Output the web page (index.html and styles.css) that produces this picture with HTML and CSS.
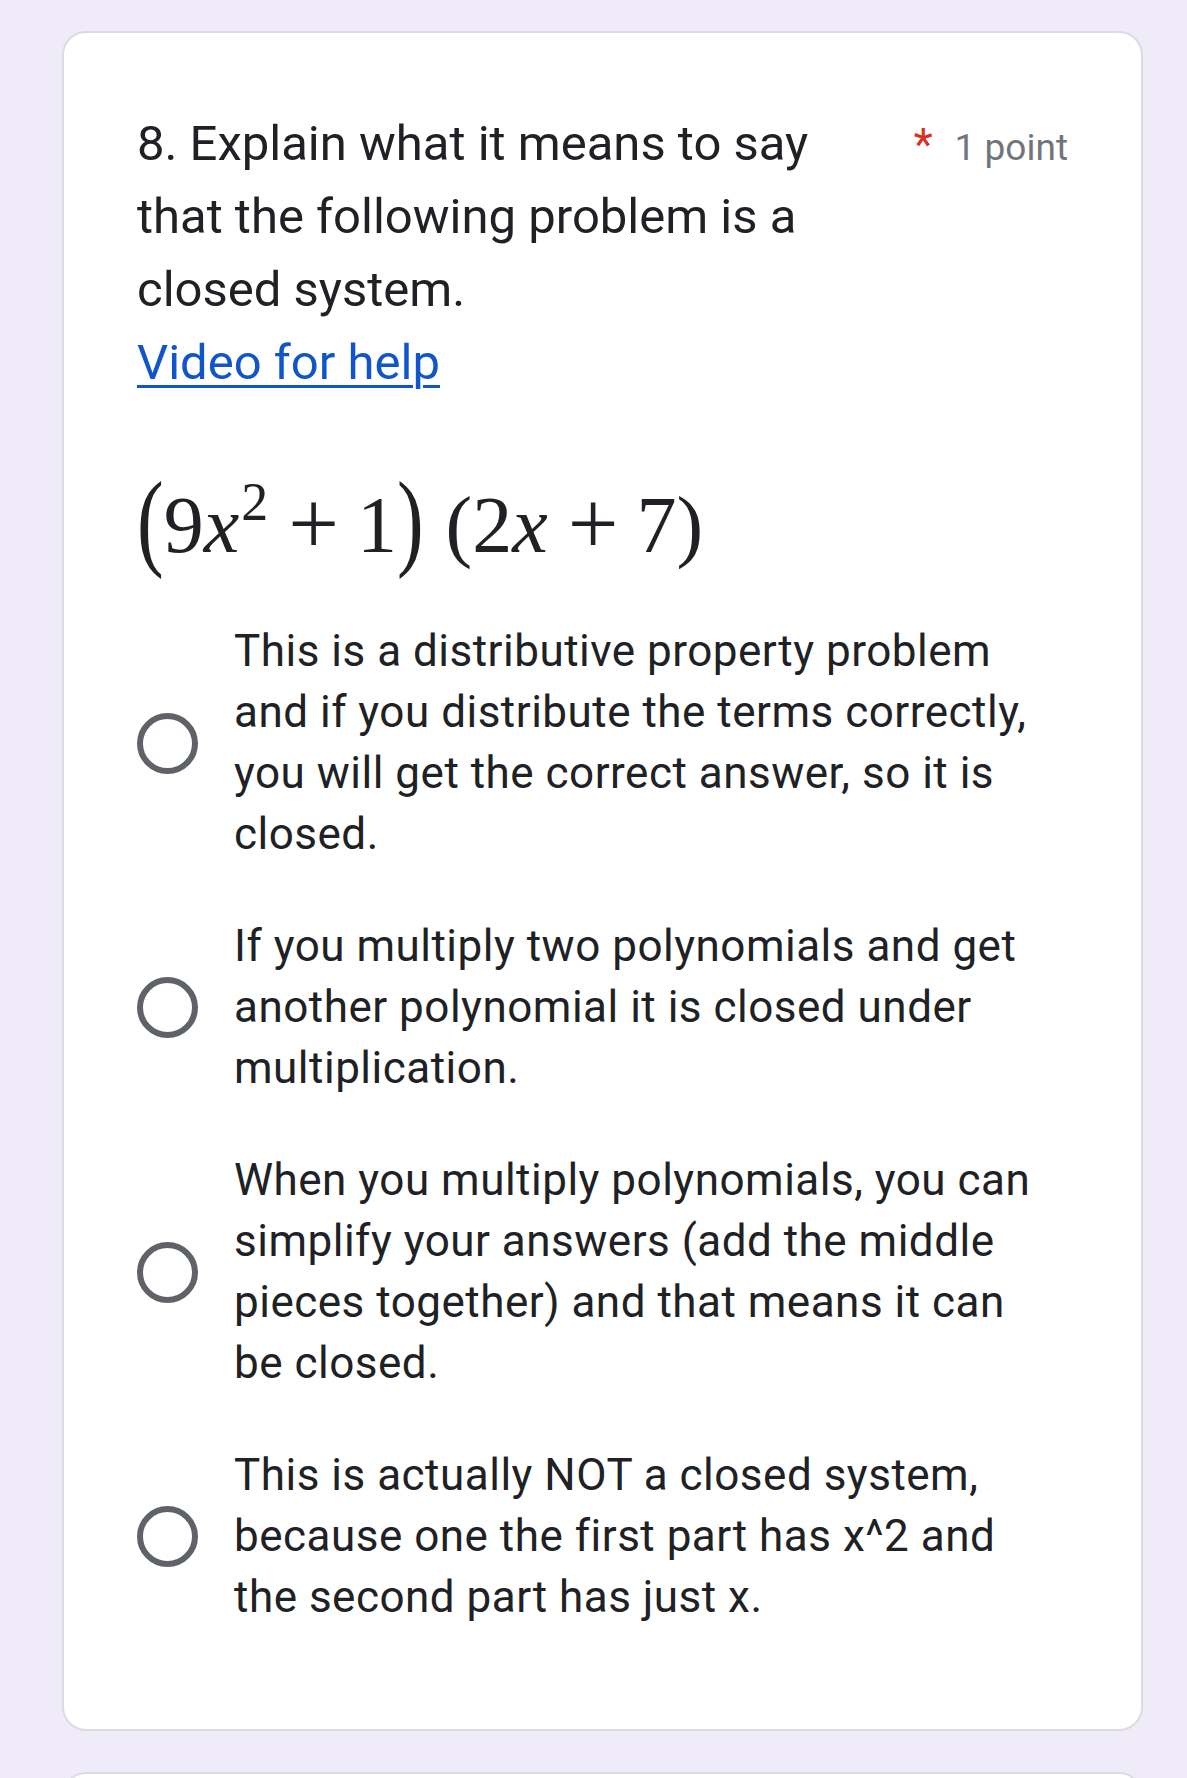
FILE: index.html
```html
<!DOCTYPE html>
<html lang="en">
<head>
    <meta charset="UTF-8">
    <meta name="viewport" content="width=device-width, initial-scale=1.0">
    <title>Question 8</title>
    <link rel="stylesheet" href="styles.css">
</head>
<body>

    <div class="card">
        <!-- Question header -->
        <div class="question-header">
            <div class="question-title">8. Explain what it means to say that the following problem is a closed system.</div>
            <div class="question-meta">
                <span class="required">*</span>
                <span class="points">1 point</span>
            </div>
        </div>
        <a class="help-link" href="#">Video for help</a>

        <!-- Expression -->
        <div class="math">
            <span class="paren big">(</span><span class="num">9</span><i class="var">x</i><sup class="exp">2</sup><span class="op">+</span><span class="num">1</span><span class="paren big">)</span><span class="paren second">(</span><span class="num">2</span><i class="var">x</i><span class="op">+</span><span class="num">7</span><span class="paren">)</span>
        </div>

        <!-- Choices -->
        <div class="options">
            <label class="option">
                <span class="radio"></span>
                <span class="option-text">This is a distributive property problem and if you distribute the terms correctly, you will get the correct answer, so it is closed.</span>
            </label>
            <label class="option">
                <span class="radio"></span>
                <span class="option-text">If you multiply two polynomials and get another polynomial it is closed under multiplication.</span>
            </label>
            <label class="option">
                <span class="radio"></span>
                <span class="option-text">When you multiply polynomials, you can simplify your answers (add the middle pieces together) and that means it can be closed.</span>
            </label>
            <label class="option">
                <span class="radio"></span>
                <span class="option-text">This is actually NOT a closed system, because one the first part has x^2 and the second part has just x.</span>
            </label>
        </div>
    </div>

    <div class="card next"></div>

</body>
</html>
```

FILE: styles.css
```css
* {
    margin: 0;
    padding: 0;
    box-sizing: border-box;
}

html, body {
    height: 100%;
    overflow: hidden;
}

body {
    background-color: #f0ebf8;
    font-family: Roboto, 'Noto Sans', sans-serif;
    color: #202124;
    padding: 31px 0 0 62px;
}

.card {
    width: 1081px;
    background: #fff;
    border: 2px solid #dadce0;
    border-radius: 24px;
    padding: 74px 73px 75px 73px;
}

.card.next {
    margin-top: 41px;
    height: 200px;
}

.question-header {
    display: flex;
    align-items: baseline;
    gap: 24px;
}

.question-title {
    flex: 1;
    font-size: 49px;
    line-height: 73px;
}

.question-meta {
    display: flex;
    align-items: baseline;
    flex-shrink: 0;
}

.required {
    color: #d93025;
    font-size: 44px;
    line-height: 73px;
    margin-right: 22px;
}

.points {
    color: #70757a;
    font-size: 37px;
    line-height: 73px;
}

.help-link {
    display: block;
    width: max-content;
    font-size: 49px;
    line-height: 73px;
    color: #1155cc;
    text-decoration: underline;
    text-decoration-thickness: 3px;
    text-underline-offset: 6px;
}

.math {
    font-family: 'Liberation Serif', 'DejaVu Serif', serif;
    font-size: 80px;
    line-height: 114px;
    height: 114px;
    margin: 69px 0 14px 0;
    white-space: nowrap;
}

.math .paren {
    display: inline-block;
}

.math .paren.big {
    transform: translateY(-6px) scaleY(1.36);
}

.math .paren.second {
    margin-left: 22px;
}

.math .var {
    font-style: italic;
}

.math .exp {
    font-size: 54px;
    vertical-align: 32px;
    line-height: 0;
    margin-left: 2px;
}

.math .op {
    font-size: 90px;
    line-height: 0;
    vertical-align: -2px;
    margin: 0 18px 0 20px;
}

.options {
    display: flex;
    flex-direction: column;
}

.option {
    display: flex;
    align-items: center;
    padding: 25px 0 26px 0;
}

.radio {
    flex-shrink: 0;
    width: 61px;
    height: 61px;
    border: 6px solid #5f6368;
    border-radius: 50%;
    margin-right: 36px;
}

.option-text {
    width: 812px;
    font-size: 44px;
    letter-spacing: 0.5px;
    line-height: 61px;
}
```
